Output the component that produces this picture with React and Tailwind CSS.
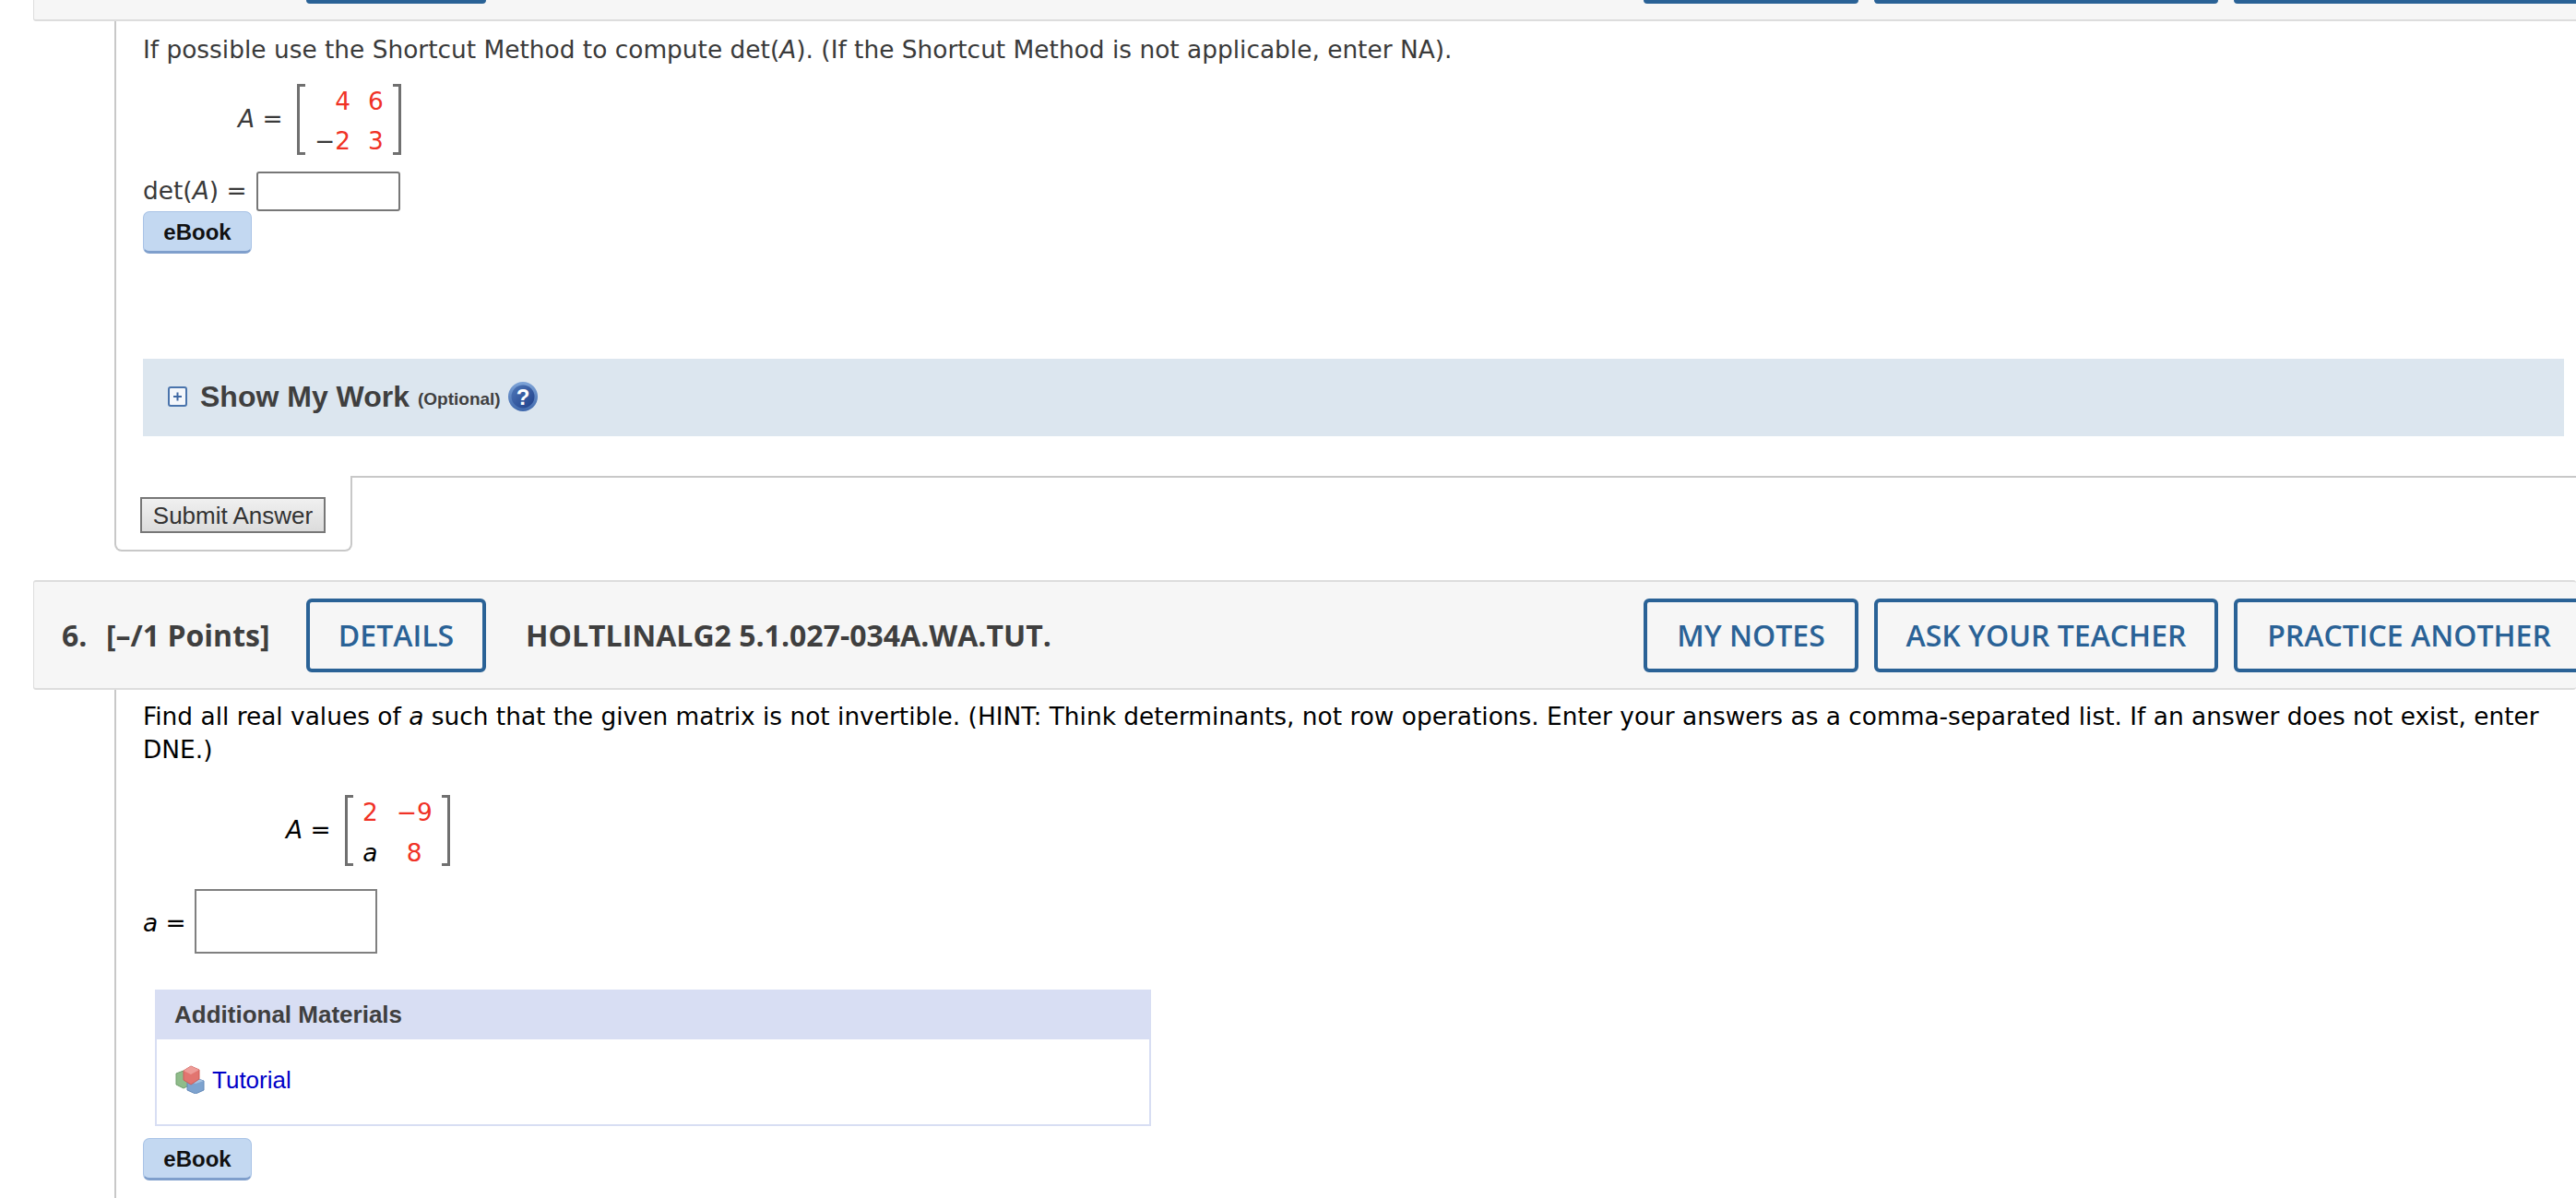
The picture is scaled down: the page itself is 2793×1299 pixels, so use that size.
const bodyFont = { fontFamily: '"DejaVu Sans", Verdana, sans-serif' };

function CubesIcon() {
  return (
    <svg width="32" height="31" viewBox="0 0 32 31" className="shrink-0 blur-[0.6px]">
      <path d="M1 9l8-3 8 4v11l-8 4-8-4z" fill="#8fbc8a" stroke="#6f9e6c" />
      <path d="M13 17l9-3 9 3v10l-9 4-9-4z" fill="#7ea3cf" stroke="#6288b8" />
      <path d="M13 17l9 3 9-3-9-3z" fill="#a5c2e2" />
      <path d="M9 6l8-5 9 4v10l-9 6-8-5z" fill="#e27570" stroke="#cc5e5a" />
      <path d="M9 6l8 4 9-5-9-4z" fill="#ee9c98" />
    </svg>
  );
}

function PlusIcon() {
  return (
    <svg width="21" height="22" viewBox="0 0 21 22" className="shrink-0">
      <rect x="1" y="1" width="19" height="20" rx="2" fill="#f4f7fb" stroke="#4a74ac" strokeWidth="2" />
      <path d="M10.5 6.5v9M6 11h9" stroke="#3f68a3" strokeWidth="2" />
    </svg>
  );
}

function HelpIcon() {
  return (
    <svg width="32" height="32" viewBox="0 0 32 32" className="shrink-0">
      <defs>
        <linearGradient id="helpRing" x1="0" y1="0" x2="0" y2="1">
          <stop offset="0" stopColor="#7ea4d8" />
          <stop offset="1" stopColor="#3f68ac" />
        </linearGradient>
        <linearGradient id="helpFill" x1="0" y1="0" x2="1" y2="1">
          <stop offset="0" stopColor="#4f78b8" />
          <stop offset="1" stopColor="#1f3f8a" />
        </linearGradient>
      </defs>
      <circle cx="16" cy="16" r="16" fill="url(#helpRing)" />
      <circle cx="16" cy="16" r="12.5" fill="url(#helpFill)" />
      <text x="16" y="24.5" textAnchor="middle" fill="#ffffff" fontSize="24" fontWeight="700" fontFamily="Liberation Sans, sans-serif">?</text>
    </svg>
  );
}

function HeaderButton({ label, className }) {
  return (
    <button className={`flex h-[80px] shrink-0 items-center justify-center rounded-[6px] border-[4px] border-[#2a6296] text-[32px] font-semibold leading-none text-[#2a6296] ${className}`}>
      {label}
    </button>
  );
}

function QuestionHeader({ number, points, code }) {
  return (
    <div className="ml-[36px] flex h-[119px] shrink-0 items-center rounded-[3px] border-y-2 border-l border-[#dddddd] bg-[#f6f6f6] font-['Open_Sans'] text-[#3f3f3f]">
      <span className="ml-[30px] w-[48px] shrink-0 text-[32px] font-bold">{number}</span>
      <span className="w-[217px] shrink-0 text-[32px] font-bold">{points}</span>
      <HeaderButton label="DETAILS" className="w-[195px]" />
      <span className="ml-[43px] w-[1212px] shrink-0 text-[32px] font-bold whitespace-nowrap">{code}</span>
      <div className="flex shrink-0 gap-[17px]">
        <HeaderButton label="MY NOTES" className="w-[233px]" />
        <HeaderButton label="ASK YOUR TEACHER" className="w-[373px]" />
        <HeaderButton label="PRACTICE ANOTHER" className="w-[380px]" />
      </div>
    </div>
  );
}

// only the bottom of the previous question's header is in view
function ClippedHeader() {
  return (
    <div className="ml-[36px] flex h-[23px] shrink-0 gap-[17px] rounded-bl-[3px] border-b-2 border-l border-[#dddddd] bg-[#f6f6f6] pl-[295px]">
      <div className="h-[4px] w-[195px] shrink-0 rounded-b-[6px] bg-[#2a6296]" />
      <div className="ml-[1238px] h-[4px] w-[233px] shrink-0 rounded-b-[6px] bg-[#2a6296]" />
      <div className="h-[4px] w-[373px] shrink-0 rounded-b-[6px] bg-[#2a6296]" />
      <div className="h-[4px] w-[380px] shrink-0 rounded-bl-[6px] bg-[#2a6296]" />
    </div>
  );
}

function Bracket({ side }) {
  const sides = side === "left" ? "border-l-[3px]" : "border-r-[3px]";
  return <div className={`h-full w-[9px] border-y-[3px] border-[#707070] ${sides}`} />;
}

function Matrix({ rows, columns }) {
  return (
    <div className="flex h-[77px] items-stretch">
      <Bracket side="left" />
      <div className={`grid ${columns} content-start pt-px text-[26.4px] leading-[36px] text-[#f03226]`}>
        {rows}
      </div>
      <Bracket side="right" />
    </div>
  );
}

function EBookButton() {
  return (
    <button className="flex h-[46px] w-[118px] items-center justify-center rounded-[7px] border border-b-[3px] border-[#a9c3e6] border-b-[#7f9fcc] bg-[#c3d8f1] pt-[2px] font-['Liberation_Sans'] text-[24px] font-bold leading-none text-[#111111]">
      eBook
    </button>
  );
}

export default function App() {
  return (
    <div className="flex h-[1299px] w-full flex-col overflow-hidden bg-white" style={bodyFont}>
      <ClippedHeader />

      {/* question 5 */}
      <div className="ml-[124px] flex shrink-0 flex-col border-l-2 border-[#c8c8c8] pb-[43px] pl-[29px] pr-[13px] text-[#3a3a3a]">
        <p className="mt-[13px] text-[26.4px] leading-[35px] whitespace-nowrap">
          If possible use the Shortcut Method to compute det(<i>A</i>). (If the Shortcut Method is not applicable, enter NA).
        </p>
        <div className="ml-[103px] mt-[20px] flex items-center">
          <span className="w-[64px] pb-[2px] text-[26.4px] whitespace-nowrap"><i>A</i> =</span>
          <Matrix
            columns="grid-cols-[auto_auto] gap-x-[19px] gap-y-[7px] pl-[10px] pr-[10px]"
            rows={
              <>
                <span className="text-right">4</span>
                <span className="text-right">6</span>
                <span className="text-right"><span className="text-[#3a3a3a]">−</span>2</span>
                <span className="text-right">3</span>
              </>
            }
          />
        </div>
        <div className="mt-[18px] flex items-center">
          <span className="w-[123px] pb-[2px] text-[26.4px] whitespace-nowrap">det(<i>A</i>) =</span>
          <input className="h-[43px] w-[156px] rounded-[3px] border-2 border-[#777777] bg-white" />
        </div>
        <div>
          <EBookButton />
        </div>
        <div className="mt-[114px] flex h-[84px] items-center bg-[#dce6ef] pb-[2px] pl-[27px] font-['Liberation_Sans'] text-[#3f3f3f]">
          <PlusIcon />
          <span className="ml-[14px] text-[32px] font-bold">Show My Work</span>
          <span className="ml-[9px] mt-[6px] text-[19px] font-bold">(Optional)</span>
          <span className="ml-[8px]"><HelpIcon /></span>
        </div>
      </div>

      <div className="ml-[124px] flex h-[82px] shrink-0">
        <div className="w-[258px] rounded-b-[8px] border-x-2 border-b-2 border-[#c8c8c8] pl-[26px] pt-[23px]">
          <button className="h-[39px] w-[201px] border-2 border-[#777777] bg-linear-to-b from-[#f0f0f0] to-[#dcdcdc] font-['Liberation_Sans'] text-[26px] leading-none text-[#333333]">
            Submit Answer
          </button>
        </div>
        <div className="flex-1 border-t-2 border-[#c8c8c8]" />
      </div>

      <div className="h-[31px] shrink-0" />

      <QuestionHeader number="6." points="[–/1 Points]" code="HOLTLINALG2 5.1.027-034A.WA.TUT." />

      {/* question 6 */}
      <div className="ml-[124px] flex flex-1 flex-col border-l-2 border-[#c8c8c8] pl-[29px] pr-[40px] text-black">
        <p className="mt-[11px] text-[26.4px] leading-[36px]">
          Find all real values of <i>a</i> such that the given matrix is not invertible. (HINT: Think determinants, not row operations. Enter your answers as a comma-separated list. If an answer does not exist, enter DNE.)
        </p>
        <div className="ml-[155px] mt-[31px] flex items-center">
          <span className="w-[64px] pb-[2px] text-[26.4px] whitespace-nowrap"><i>A</i> =</span>
          <Matrix
            columns="grid-cols-[auto_auto] gap-x-[20px] gap-y-[8px] pl-[10px] pr-[10px]"
            rows={
              <>
                <span className="text-center">2</span>
                <span className="text-center">−9</span>
                <i className="text-center text-black">a</i>
                <span className="text-center">8</span>
              </>
            }
          />
        </div>
        <div className="mt-[25px] flex items-center">
          <span className="w-[56px] pt-[3px] text-[26.4px] whitespace-nowrap"><i>a</i> =</span>
          <input className="h-[70px] w-[198px] border-2 border-[#808080] bg-white" />
        </div>
        <div className="ml-[13px] mt-[39px] h-[148px] w-[1080px] border-2 border-[#d8def3] font-['Liberation_Sans']">
          <div className="flex h-[52px] items-center bg-[#d8def3] pb-[2px] pl-[19px] text-[26px] font-bold text-[#3f3f3f]">
            Additional Materials
          </div>
          <div className="flex items-center gap-[8px] pl-[20px] pt-[27px]">
            <CubesIcon />
            <a className="pt-[2px] text-[26px] leading-[31px] text-[#0000c8]">Tutorial</a>
          </div>
        </div>
        <div className="mt-[13px]">
          <EBookButton />
        </div>
      </div>
    </div>
  );
}
